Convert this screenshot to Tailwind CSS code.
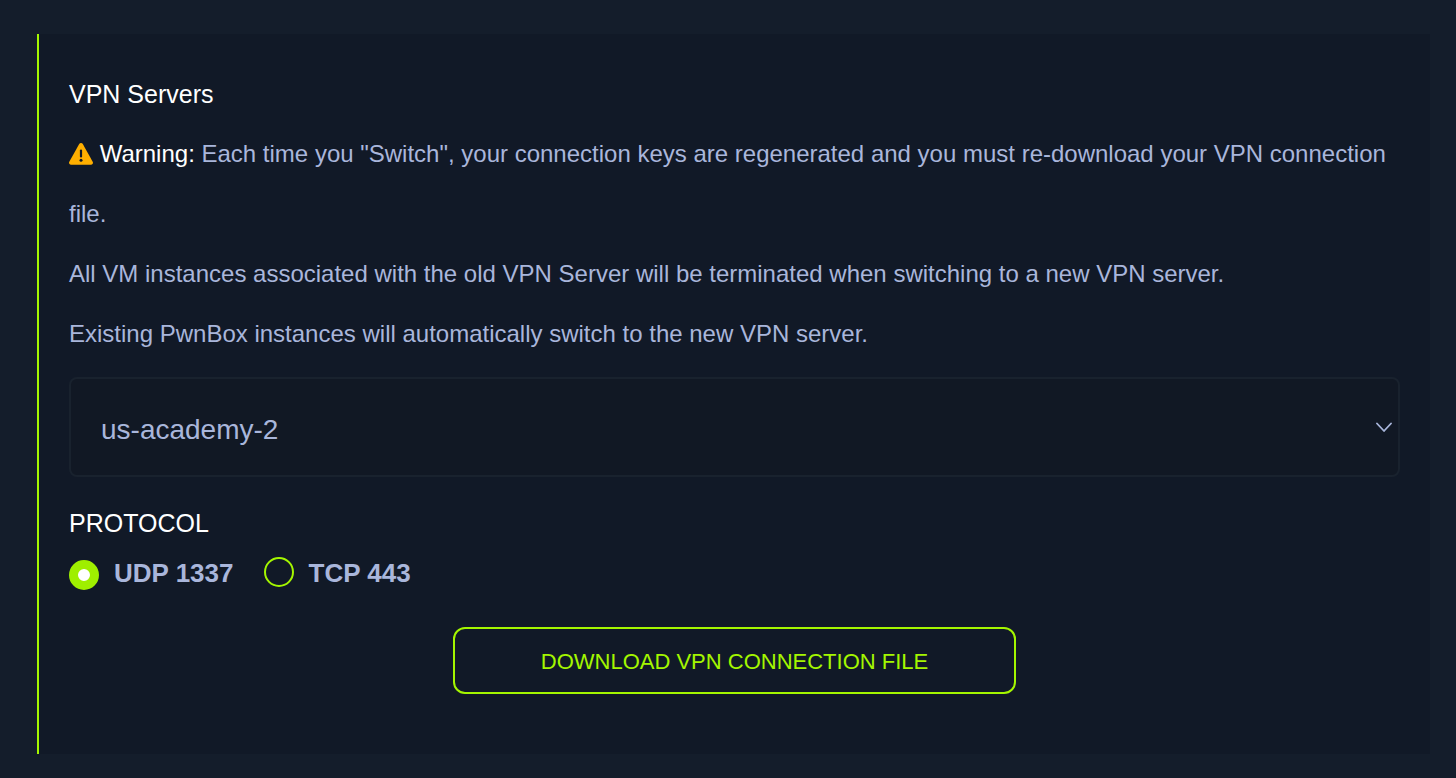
<!DOCTYPE html>
<html lang="en">
<head>
    <meta charset="UTF-8">
    <meta name="viewport" content="width=device-width, initial-scale=1.0">
    <title>VPN Servers</title>
    <script src="https://cdn.jsdelivr.net/npm/@tailwindcss/browser@4"></script>
</head>
<body class="min-h-screen bg-[#141d2b] pt-[34px] pr-[26px] pb-6 pl-[37px] font-['Liberation_Sans',Arial,sans-serif] text-[#a9b6db]">
    <section class="border-l-2 border-[#a4f600] bg-[#111927] px-[30px] pt-[30px] pb-[60px]">
        <h2 class="text-[25px] leading-[60px] text-white">VPN Servers</h2>
        <p class="text-2xl leading-[60px]">
            <svg class="mb-1 inline-block h-[22px] w-6" viewBox="0 0 24 22" aria-hidden="true">
                <path d="M10.2 1.1a2.1 2.1 0 0 1 3.6 0l9.9 17.6a2.1 2.1 0 0 1-1.8 3.1H2.1a2.1 2.1 0 0 1-1.8-3.1z" fill="#ffaf00"/>
                <path d="M12 7.6v5.8" stroke="#111927" stroke-width="2.2" stroke-linecap="round"/>
                <circle cx="12" cy="17.3" r="1.5" fill="#111927"/>
            </svg>
            <span class="text-white">Warning:</span>
            <span>Each time you "Switch", your connection keys are regenerated and you must re-download your VPN connection file.</span>
        </p>
        <p class="text-2xl leading-[60px]">All VM instances associated with the old VPN Server will be terminated when switching to a new VPN server.</p>
        <p class="text-2xl leading-[60px]">Existing PwnBox instances will automatically switch to the new VPN server.</p>

        <div class="relative mt-[13px]">
            <select aria-label="VPN server" class="block h-[100px] w-full appearance-none rounded-lg border-2 border-[#19222e] bg-[#111824] px-[30px] pt-1.5 text-[28px]">
                <option>us-academy-2</option>
            </select>
            <svg class="pointer-events-none absolute top-[45px] right-2 h-[11px] w-4" viewBox="0 0 16 11" fill="none" stroke="#a9b6db" stroke-width="1.8" stroke-linecap="round" stroke-linejoin="round" aria-hidden="true">
                <path d="M1 1.5 8 9l7-7.5"/>
            </svg>
        </div>

        <fieldset class="mt-4">
            <legend class="text-[25px] leading-[60px] text-white">PROTOCOL</legend>
            <div class="flex h-10 items-center gap-[30px] text-[26px] font-bold">
                <label class="flex items-center gap-[15px]">
                    <input type="radio" name="protocol" value="udp" checked class="mt-1 size-[30px] appearance-none rounded-full border-2 border-[#9fef00] checked:border-[9px] checked:bg-white">
                    UDP 1337
                </label>
                <label class="flex items-center gap-[15px]">
                    <input type="radio" name="protocol" value="tcp" class="mb-0.5 size-[30px] appearance-none rounded-full border-2 border-[#a4f600] checked:border-[9px] checked:bg-white">
                    TCP 443
                </label>
            </div>
        </fieldset>

        <button type="button" class="mx-auto mt-[34px] block rounded-xl border-2 border-[#a4f600] px-[86px] pt-[17px] pb-[15px] text-[22px] leading-[31px] text-[#a4f600]">DOWNLOAD VPN CONNECTION FILE</button>
    </section>
</body>
</html>
